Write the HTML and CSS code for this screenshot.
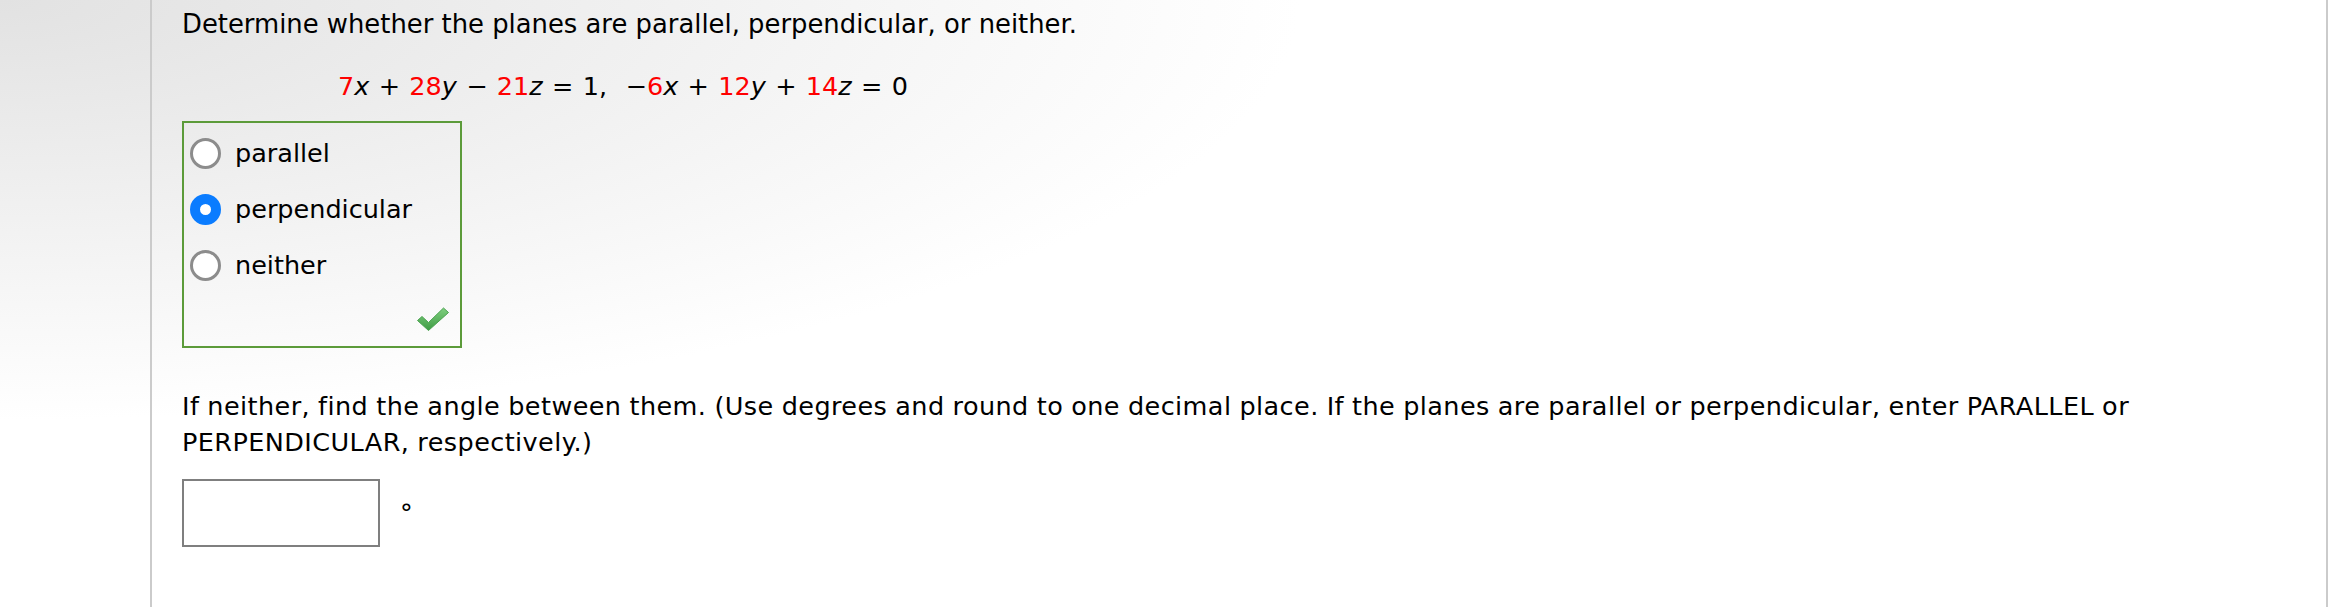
FILE: index.html
```html
<!DOCTYPE html>
<html lang="en">
<head>
<meta charset="utf-8">
<title>Planes</title>
<link rel="stylesheet" href="styles.css">
</head>
<body>
<div class="page">
  <div class="content">
    <p class="prompt">Determine whether the planes are parallel, perpendicular, or neither.</p>
    <p class="equation"><span class="num">7</span><i>x</i> + <span class="num">28</span><i>y</i> − <span class="num">21</span><i>z</i> = 1,&nbsp; −<span class="num">6</span><i>x</i> + <span class="num">12</span><i>y</i> + <span class="num">14</span><i>z</i> = 0</p>
    <div class="options">
      <div class="option"><span class="radio"></span><span class="label">parallel</span></div>
      <div class="option"><span class="radio checked"></span><span class="label">perpendicular</span></div>
      <div class="option"><span class="radio"></span><span class="label">neither</span></div>
      <div class="feedback">
        <svg class="check" width="34" height="26" viewBox="0 0 34 26">
          <defs>
            <linearGradient id="g" x1="0" y1="0" x2="0" y2="1">
              <stop offset="0" stop-color="#7fcf7f"/>
              <stop offset="1" stop-color="#3e9b44"/>
            </linearGradient>
          </defs>
          <path d="M1.5 14.5 L6 10.5 L12.5 16.5 L27.5 2 L32.5 6.5 L12.5 24.5 Z" fill="url(#g)" stroke="#4aa34f" stroke-width="1" stroke-linejoin="round"/>
        </svg>
      </div>
    </div>
    <p class="instructions">If neither, find the angle between them. (Use degrees and round to one decimal place. If the planes are parallel or perpendicular, enter PARALLEL or PERPENDICULAR, respectively.)</p>
    <div class="answer">
      <span class="input"></span>
      <span class="unit">°</span>
    </div>
  </div>
</div>
</body>
</html>
```
FILE: styles.css
```css
html, body {
  margin: 0;
  padding: 0;
}
body {
  width: 2347px;
  height: 607px;
  overflow: hidden;
  background: #ffffff;
  background-image: radial-gradient(ellipse 1300px 420px at 0 0, #e2e2e2 0%, #efefef 45%, #ffffff 100%);
  background-repeat: no-repeat;
  font-family: "DejaVu Sans", Verdana, sans-serif;
  color: #000;
}
.page {
  margin-left: 150px;
  width: 2174px;
  height: 607px;
  border-left: 2px solid #cbcbcb;
  border-right: 2px solid #cbcbcb;
}
.content {
  padding: 6px 30px 0 30px;
  display: flex;
  flex-direction: column;
  align-items: flex-start;
}
p {
  margin: 0;
}
.prompt {
  font-size: 25.85px;
  line-height: 36px;
}
.equation {
  margin-top: 26px;
  margin-left: 156px;
  font-size: 25.5px;
  line-height: 36px;
  word-spacing: 1.2px;
  white-space: pre;
}
.equation i {
  font-style: italic;
}
.num {
  color: #ff0000;
}
.options {
  margin-top: 17px;
  height: 221px;
  border: 2px solid #5c9b3a;
  padding: 2px 0 0 6px;
  box-sizing: content-box;
  display: flex;
  flex-direction: column;
  width: 270px;
}
.option {
  height: 56px;
  display: flex;
  align-items: center;
  gap: 14px;
}
.radio {
  width: 31px;
  height: 31px;
  box-sizing: border-box;
  border: 3px solid #8c8c8c;
  border-radius: 50%;
  background: #fff;
  flex: none;
}
.radio.checked {
  border: 10px solid #0a7cff;
  background: #fff;
}
.label {
  font-size: 25.5px;
  line-height: 36px;
}
.feedback {
  display: flex;
  justify-content: flex-end;
  padding-right: 10px;
  margin-top: 13px;
}
.check {
  display: block;
}
.instructions {
  margin-top: 40px;
  font-size: 25.5px;
  line-height: 36px;
  letter-spacing: 0.42px;
  word-spacing: -0.5px;
}
.answer {
  margin-top: 19px;
  display: flex;
  align-items: center;
  gap: 20px;
}
.input {
  display: block;
  width: 198px;
  height: 68px;
  box-sizing: border-box;
  border: 2px solid #7f7f7f;
  background: #fff;
}
.unit {
  font-size: 25.5px;
  line-height: 36px;
}
```
